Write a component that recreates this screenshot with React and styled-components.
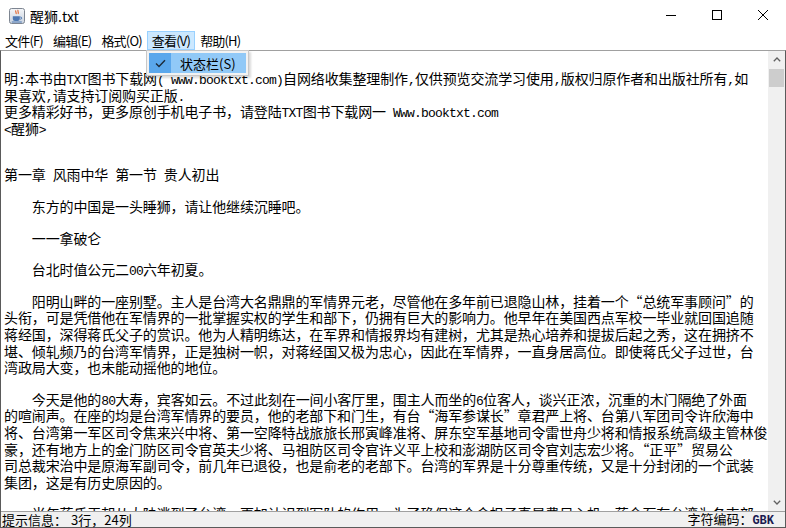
import React from "react";
import styled, { createGlobalStyle } from "styled-components";

// lines of the txt file as shown in the text area
const lines = [
  "明:本书由TXT图书下载网( www.booktxt.com)自网络收集整理制作,仅供预览交流学习使用,版权归原作者和出版社所有,如",
  "果喜欢,请支持订阅购买正版.",
  "更多精彩好书，更多原创手机电子书，请登陆TXT图书下载网一 Www.booktxt.com",
  "<醒狮>",
  "",
  "",
  "第一章 风雨中华 第一节 贵人初出",
  "",
  "　　东方的中国是一头睡狮，请让他继续沉睡吧。",
  "",
  "　　一一拿破仑",
  "",
  "　　台北时值公元二00六年初夏。",
  "",
  "　　阳明山畔的一座别墅。主人是台湾大名鼎鼎的军情界元老，尽管他在多年前已退隐山林，挂着一个“总统军事顾问”的",
  "头衔，可是凭借他在军情界的一批掌握实权的学生和部下，仍拥有巨大的影响力。他早年在美国西点军校一毕业就回国追随",
  "蒋经国，深得蒋氏父子的赏识。他为人精明练达，在军界和情报界均有建树，尤其是热心培养和提拔后起之秀，这在拥挤不",
  "堪、倾轧频乃的台湾军情界，正是独树一帜，对蒋经国又极为忠心，因此在军情界，一直身居高位。即使蒋氏父子过世，台",
  "湾政局大变，也未能动摇他的地位。",
  "",
  "　　今天是他的80大寿，宾客如云。不过此刻在一间小客厅里，围主人而坐的6位客人，谈兴正浓，沉重的木门隔绝了外面",
  "的喧闹声。在座的均是台湾军情界的要员，他的老部下和门生，有台“海军参谋长”章君严上将、台第八军团司令许欣海中",
  "将、台湾第一军区司令焦来兴中将、第一空降特战旅旅长邢寅峰准将、屏东空军基地司令雷世舟少将和情报系统高级主管林俊",
  "豪，还有地方上的金门防区司令官英夫少将、马祖防区司令官许义平上校和澎湖防区司令官刘志宏少将。“正平”贸易公",
  "司总裁宋治中是原海军副司令，前几年已退役，也是俞老的老部下。台湾的军界是十分尊重传统，又是十分封闭的一个武装",
  "集团，这是有历史原因的。",
  "",
  "　　当年蒋氏王朝从大陆逃到了台湾，更加认识到军队的作用，为了确保这个命根子真是费尽心机。蒋介石在台湾为各支部",
];

const menus = ["文件(F)", "编辑(E)", "格式(O)", "查看(V)", "帮助(H)"];

// half width runs get the narrow latin font
const renderLine = (s) =>
  s.split(/([\x20-\x7e]+)/).map((part, i) =>
    /^[\x20-\x7e]+$/.test(part) ? <Lat key={i}>{part}</Lat> : part
  );

const JavaIcon = () => (
  <svg width="16" height="16" viewBox="0 0 16 16">
    <defs>
      <linearGradient id="jg" x1="0" y1="0" x2="0" y2="1">
        <stop offset="0" stopColor="#f4f6f9" />
        <stop offset="1" stopColor="#c9d2de" />
      </linearGradient>
    </defs>
    <rect x="0.5" y="0.5" width="15" height="15" rx="2" fill="url(#jg)" stroke="#7d8591" />
    <path d="M7 2.5c-1.2 1.2 1 2 0 3.5M9.2 2c-1.2 1.2 1 2.2-.2 3.8" stroke="#e2622b" strokeWidth="1.1" fill="none" />
    <path d="M3.8 8.2h7v2.6a2.2 2.2 0 0 1-2.2 2.2H6a2.2 2.2 0 0 1-2.2-2.2z" fill="#4d78b3" />
    <path d="M10.8 9.1h.9a1 1 0 0 1 0 2h-.9" stroke="#4d78b3" fill="none" />
    <path d="M2.8 14h10" stroke="#4d78b3" />
  </svg>
);

const Chevron = ({ up }) => (
  <svg width="8" height="5" viewBox="0 0 8 5">
    <path d={up ? "M.8 4.2L4 1l3.2 3.2" : "M.8.8L4 4l3.2-3.2"} stroke="#606060" strokeWidth="1.3" fill="none" />
  </svg>
);

export default function App() {
  return (
    <>
      <GlobalStyle />
      <Window>
        <TitleBar>
          <JavaIcon />
          <Title>醒狮.txt</Title>
          <Controls>
            <CtrlButton>
              <svg width="10" height="10" viewBox="0 0 10 10">
                <path d="M0 5.5h10" stroke="#000" />
              </svg>
            </CtrlButton>
            <CtrlButton>
              <svg width="10" height="10" viewBox="0 0 10 10">
                <rect x="0.5" y="0.5" width="9" height="9" stroke="#000" fill="none" />
              </svg>
            </CtrlButton>
            <CtrlButton>
              <svg width="10" height="10" viewBox="0 0 10 10">
                <path d="M0 0l10 10M10 0L0 10" stroke="#000" />
              </svg>
            </CtrlButton>
          </Controls>
        </TitleBar>

        <MenuBar>
          {menus.map((m) => (
            <MenuItem key={m} $open={m === "查看(V)"}>
              {m}
            </MenuItem>
          ))}
        </MenuBar>

        <Body>
          <Editor>
            <TextPane>
              {lines.map((l, i) => (
                <Row key={i} $blank={l === ""}>
                  {renderLine(l)}
                </Row>
              ))}
            </TextPane>
            <ScrollBar>
              <Arrow>
                <Chevron up />
              </Arrow>
              <Track>
                <Thumb />
              </Track>
              <Arrow>
                <Chevron />
              </Arrow>
            </ScrollBar>
          </Editor>
          <StatusBar>
            <StatusGroup>
              <span>提示信息：</span>
              <span>3行，24列</span>
            </StatusGroup>
            <span>
              字符编码：<Code>GBK</Code>
            </span>
          </StatusBar>
        </Body>

        <Dropdown>
          <DropItem>
            <CheckCell>
              <svg width="11" height="9" viewBox="0 0 11 9">
                <path d="M1 4.6l3 3L10 1.2" stroke="#1c2b3a" strokeWidth="1.4" fill="none" />
              </svg>
            </CheckCell>
            <DropLabel>状态栏(S)</DropLabel>
          </DropItem>
        </Dropdown>
      </Window>
    </>
  );
}

const GlobalStyle = createGlobalStyle`
  body {
    margin: 0;
    overflow: hidden;
    background: #fff;
    font-family: "Noto Sans CJK SC", "Noto Sans", sans-serif;
  }
`;

const Window = styled.div`
  position: relative;
  width: 786px;
  height: 528px;
  display: flex;
  flex-direction: column;
  background: #fff;
  overflow: hidden;
`;

const TitleBar = styled.div`
  height: 31px;
  display: flex;
  align-items: center;
  padding-left: 9px;
  flex-shrink: 0;
`;

const Title = styled.span`
  margin-left: 5px;
  font-size: 14px;
  color: #000;
`;

const Controls = styled.div`
  margin-left: auto;
  display: flex;
  align-self: stretch;
`;

const CtrlButton = styled.div`
  width: 46px;
  display: flex;
  align-items: center;
  justify-content: center;
  padding-bottom: 1px;
`;

const MenuBar = styled.div`
  height: 19px;
  display: flex;
  align-items: stretch;
  flex-shrink: 0;
`;

const MenuItem = styled.div`
  display: flex;
  align-items: center;
  padding: 0 4px;
  font-size: 13px;
  letter-spacing: -0.8px;
  color: #000;
  border: 1px solid ${(p) => (p.$open ? "#99d1ff" : "transparent")};
  background: ${(p) => (p.$open ? "#cce8ff" : "transparent")};
`;

const Body = styled.div`
  flex: 1;
  min-height: 0;
  display: flex;
  flex-direction: column;
  border-top: 1px solid #a0a0a0;
  border-left: 1px solid #5a5a5a;
  border-right: 1px solid #5a5a5a;
  border-bottom: 1px solid #5a5a5a;
`;

const Editor = styled.div`
  flex: 1;
  min-height: 0;
  display: flex;
`;

const TextPane = styled.div`
  flex: 1;
  overflow: hidden;
  padding: 19px 0 0 3px;
  font-size: 14px;
  letter-spacing: -0.12px;
  color: #000;
  white-space: pre;
`;

const Row = styled.div`
  height: ${(p) => (p.$blank ? 15 : 16.6)}px;
  line-height: ${(p) => (p.$blank ? 15 : 16.6)}px;
`;

const Lat = styled.span`
  font-family: "Liberation Mono", monospace;
  font-size: 13px;
  letter-spacing: -0.8px;
`;

const ScrollBar = styled.div`
  width: 17px;
  display: flex;
  flex-direction: column;
  background: #f0f0f0;
`;

const Arrow = styled.div`
  height: 17px;
  display: flex;
  align-items: center;
  justify-content: center;
`;

const Track = styled.div`
  flex: 1;
  padding: 1px 1px 0;
`;

const Thumb = styled.div`
  height: 18px;
  background: #cdcdcd;
`;

const StatusBar = styled.div`
  height: 15px;
  display: flex;
  align-items: center;
  justify-content: space-between;
  padding: 0 11px 0 1px;
  border-top: 1px solid #a0a0a0;
  background: #f0f0f0;
  font-size: 13px;
  line-height: 15px;
  color: #000;
  white-space: pre;
`;

const StatusGroup = styled.div`
  display: flex;
  gap: 4px;
`;

const Code = styled.span`
  font-family: "Liberation Mono", monospace;
  font-size: 12px;
  font-weight: bold;
  color: #1a1a50;
`;

const Dropdown = styled.div`
  position: absolute;
  top: 50px;
  left: 146px;
  width: 97px;
  padding: 2px;
  background: #f2f2f2;
  border: 1px solid #c8c8c8;
  box-shadow: 2px 2px 2px rgba(0, 0, 0, 0.15);
`;

const DropItem = styled.div`
  height: 20px;
  display: flex;
`;

const CheckCell = styled.div`
  width: 22px;
  display: flex;
  align-items: center;
  justify-content: center;
  background: #5aa7ec;
`;

const DropLabel = styled.div`
  flex: 1;
  display: flex;
  align-items: center;
  padding-left: 9px;
  background: #91c9f7;
  font-size: 13px;
  color: #000;
`;
